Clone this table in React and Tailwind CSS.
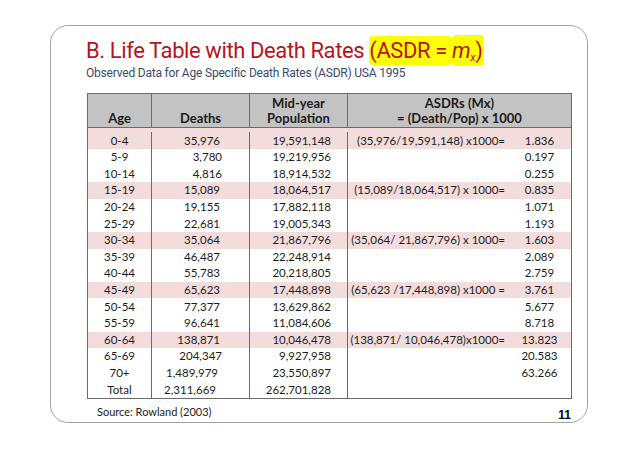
import React from 'react';

const rows = [
  { age: '0-4', deaths: '35,976', pop: '19,591,148', formula: '(35,976/19,591,148) x1000=', rate: '1.836', pink: true, first: true },
  { age: '5-9', deaths: '3,780', pop: '19,219,956', rate: '0.197', dpr: 'pr-[27px]' },
  { age: '10-14', deaths: '4,816', pop: '18,914,532', rate: '0.255', dpr: 'pr-[27px]' },
  { age: '15-19', deaths: '15,089', pop: '18,064,517', formula: '(15,089/18,064,517) x 1000=', rate: '0.835', pink: true },
  { age: '20-24', deaths: '19,155', pop: '17,882,118', rate: '1.071' },
  { age: '25-29', deaths: '22,681', pop: '19,005,343', rate: '1.193' },
  { age: '30-34', deaths: '35,064', pop: '21,867,796', formula: '(35,064/ 21,867,796) x 1000=', rate: '1.603', pink: true },
  { age: '35-39', deaths: '46,487', pop: '22,248,914', rate: '2.089' },
  { age: '40-44', deaths: '55,783', pop: '20,218,805', rate: '2.759' },
  { age: '45-49', deaths: '65,623', pop: '17,448,898', formula: '(65,623 /17,448,898) x1000 =', rate: '3.761', pink: true },
  { age: '50-54', deaths: '77,377', pop: '13,629,862', rate: '5.677' },
  { age: '55-59', deaths: '96,641', pop: '11,084,606', rate: '8.718' },
  { age: '60-64', deaths: '138,871', pop: '10,046,478', formula: '(138,871/ 10,046,478)x1000=', rate: '13.823', pink: true },
  { age: '65-69', deaths: '204,347', pop: '9,927,958', rate: '20.583', dpr: 'pr-[27px]' },
  { age: '70+', deaths: '1,489,979', pop: '23,550,897', rate: '63.266', dpr: 'pr-[31px]' },
  { age: 'Total', deaths: '2,311,669', pop: '262,701,828', rate: '', dpr: 'pr-[33px]' },
];

const Row = ({ r }) => (
  <div
    className={`flex ${r.first ? 'h-[21px] pt-[4px]' : 'h-[16.6px]'} ${r.pink ? 'bg-[#f2dcdc]' : ''} items-center leading-[16px]`}
  >
    <div className="w-[64px] h-full flex items-center justify-center border-r border-[#6b6b6b]">{r.age}</div>
    <div className={`w-[98px] h-full flex items-center justify-end border-r border-[#6b6b6b] ${r.dpr || 'pr-[29px]'}`}>
      {r.deaths}
    </div>
    <div className="w-[98px] h-full flex items-center justify-end border-r border-[#6b6b6b] pr-[16px]">{r.pop}</div>
    <div className="flex-1 h-full flex items-center">
      <div className="w-[160px] text-right pr-[3px] whitespace-nowrap">{r.formula || ''}</div>
      <div className="flex-1 text-center">{r.rate}</div>
    </div>
  </div>
);

const App = () => {
  return (
    <div className="w-[638px] h-[451px] bg-white pt-[25px] pl-[50px]">
      <div className="w-[538px] h-[398px] border border-[#a3a3a3] rounded-[18px] flex flex-col">
        <div className="pl-[35px] pt-[12px]">
          <h1
            className="text-[22px] leading-[26px] text-[#b8141d] whitespace-nowrap tracking-[-0.4px]"
            style={{ fontFamily: 'Roboto, sans-serif' }}
          >
            B. Life Table with Death Rates{' '}
            <span className="bg-[#ffff00] rounded-[4px] py-[2px]">(ASDR = </span>
            <span className="bg-[#ffff00] rounded-[4px] py-[3px] pr-[1px]">
              <i>m</i>
              <sub className="text-[11px] italic">x</sub>)
            </span>
          </h1>
          <p
            className="text-[12px] leading-[16px] mt-[1px] text-[#3b4a6d] whitespace-nowrap tracking-[-0.2px]"
            style={{ fontFamily: 'Roboto, sans-serif' }}
          >
            Observed Data for Age Specific Death Rates (ASDR) USA 1995
          </p>
        </div>

        <div
          className="ml-[36px] mt-[12px] w-[485px] border border-[#6b6b6b] text-[11.5px] text-[#1c1c1c]"
          style={{ fontFamily: 'Lato, sans-serif' }}
        >
          <div className="flex h-[34px] bg-[#c3c3c3] border-b border-[#6b6b6b] font-bold text-[13px] leading-[15px] items-stretch">
            <div className="w-[64px] flex items-end justify-center pb-[1px] border-r border-[#6b6b6b]">Age</div>
            <div className="w-[98px] flex items-end justify-center pb-[1px] border-r border-[#6b6b6b]">Deaths</div>
            <div className="w-[98px] flex flex-col items-center justify-end pb-[1px] border-r border-[#6b6b6b]">
              <span>Mid-year</span>
              <span>Population</span>
            </div>
            <div className="flex-1 flex flex-col items-center justify-end pb-[1px]">
              <span>ASDRs (Mx)</span>
              <span>= (Death/Pop) x 1000</span>
            </div>
          </div>
          {rows.map((r) => (
            <Row key={r.age} r={r} />
          ))}
        </div>

        <div className="flex justify-between pl-[46px] pr-[16px]">
          <span className="text-[11px] leading-[16px] pt-[5px] text-[#222]" style={{ fontFamily: 'Lato, sans-serif' }}>
            Source: Rowland (2003)
          </span>
          <span
            className="text-[12px] leading-[14px] pt-[9px] font-bold text-black"
            style={{ fontFamily: '"Liberation Sans", Arial, sans-serif' }}
          >
            11
          </span>
        </div>
      </div>
    </div>
  );
};

export default App;
